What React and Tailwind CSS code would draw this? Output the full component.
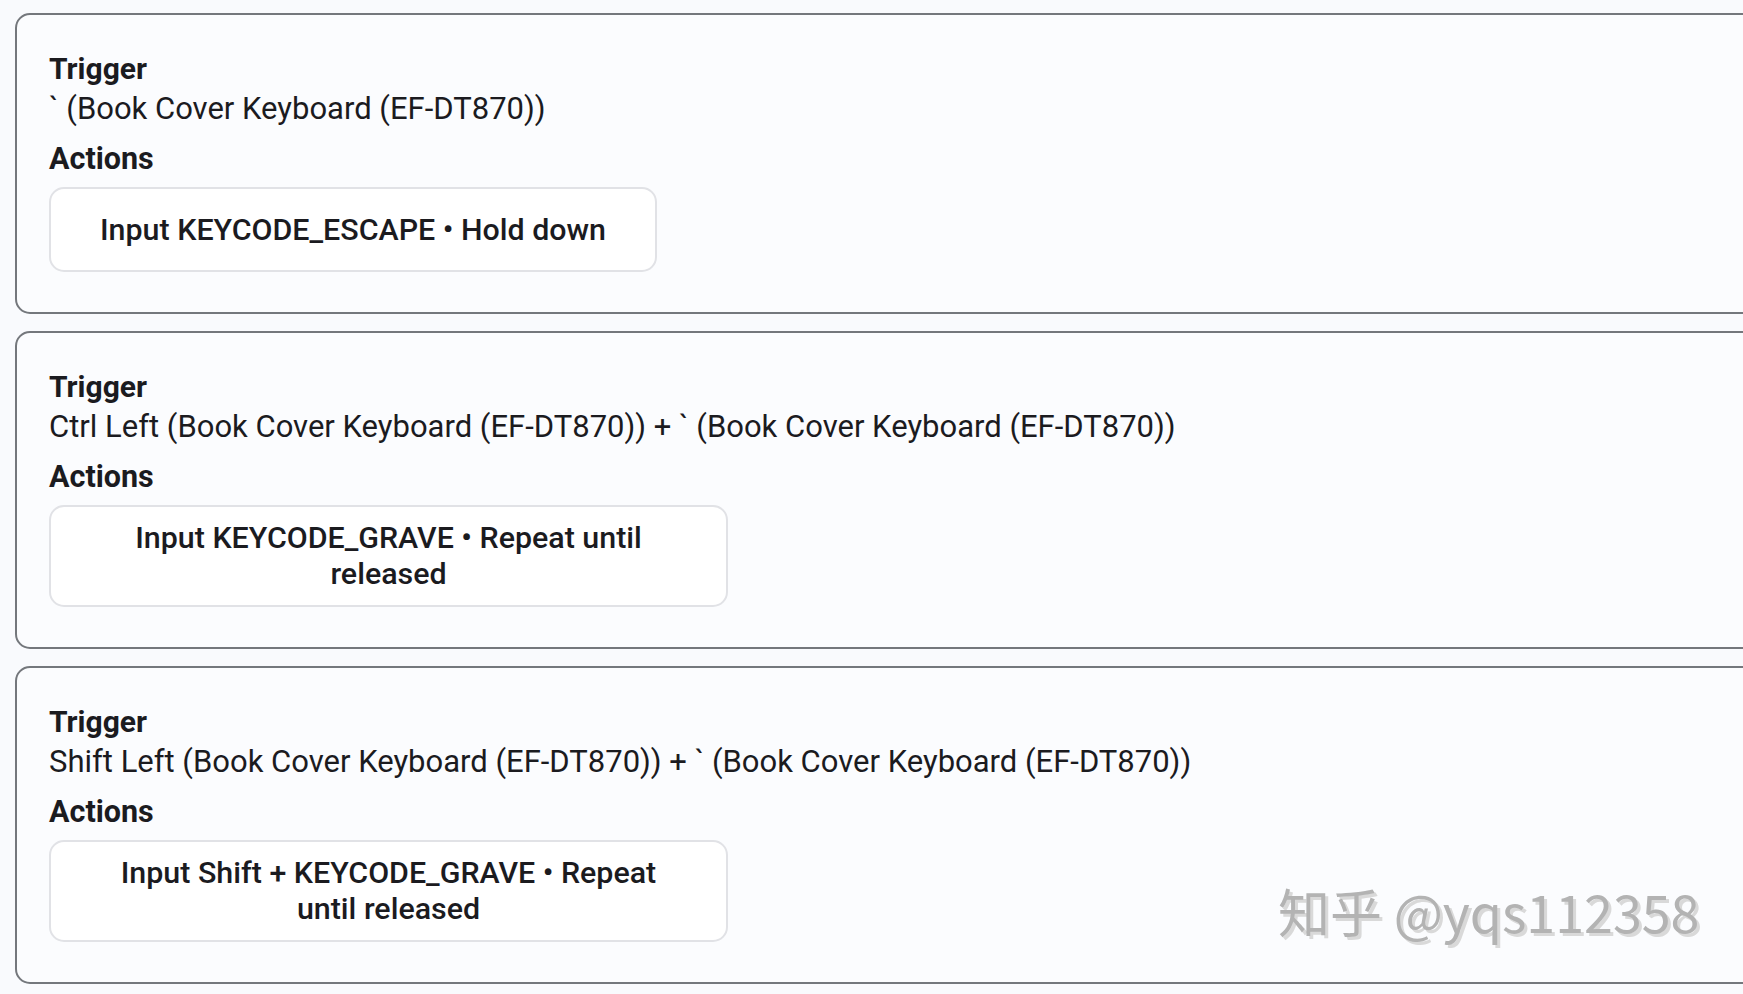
import React from 'react';

const mappings = [
  {
    trigger: '` (Book Cover Keyboard (EF-DT870))',
    action: 'Input KEYCODE_ESCAPE • Hold down',
  },
  {
    trigger: 'Ctrl Left (Book Cover Keyboard (EF-DT870)) + ` (Book Cover Keyboard (EF-DT870))',
    action: 'Input KEYCODE_GRAVE • Repeat until released',
  },
  {
    trigger: 'Shift Left (Book Cover Keyboard (EF-DT870)) + ` (Book Cover Keyboard (EF-DT870))',
    action: 'Input Shift + KEYCODE_GRAVE • Repeat until released',
  },
];

const MappingCard = ({ trigger, action }) => (
  <div className="mr-[-60px] rounded-[15px] border-2 border-[#74777c] bg-[#fbfcfe] pb-[40px] pl-[32px] pr-8 pt-[34px]">
    <div className="text-[30px] font-bold leading-[40px] text-[#1b1b1f]">Trigger</div>
    <div className="text-[31px] leading-[40px] text-[#1b1b1f]">{trigger}</div>
    <div className="mt-[10px] text-[30.5px] font-bold leading-[40px] text-[#1b1b1f]">Actions</div>
    <div className="mt-[8px] flex min-h-[85px] w-fit max-w-[679px] items-center justify-center rounded-[15px] border-2 border-[#e1e2e6] bg-white px-[49px] py-[13px] text-center text-[30.4px] font-medium leading-[36px] text-[#1b1b1f]">
      {action}
    </div>
  </div>
);

export default function App() {
  return (
    <div className="relative h-[994px] w-full overflow-hidden bg-[#f9fafd] font-['Roboto',sans-serif]">
      <div className="flex flex-col gap-[17px] pl-[15px] pt-[13px]">
        {mappings.map((m) => (
          <MappingCard key={m.trigger} trigger={m.trigger} action={m.action} />
        ))}
      </div>
      <div className="absolute left-[1278px] top-[881px] font-['Noto_Sans_CJK_SC',sans-serif] text-[52px] leading-[60px] text-[#b3b3b3] [text-shadow:3px_3px_0_#d9d9d9]">
        知乎 @yqs112358
      </div>
    </div>
  );
}
